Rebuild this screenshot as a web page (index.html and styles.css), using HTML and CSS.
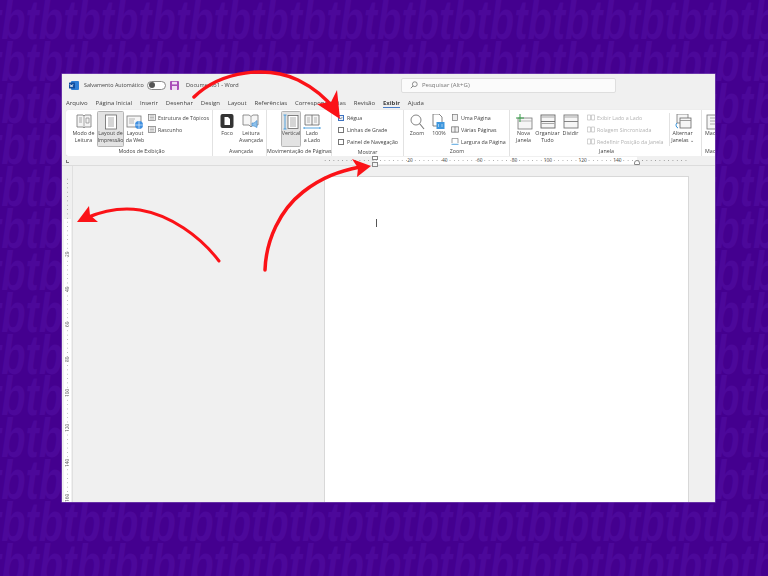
FILE: index.html
```html
<!DOCTYPE html>
<html lang="pt-BR">
<head>
<meta charset="utf-8">
<title>Word - Exibir - Régua</title>
<link rel="stylesheet" href="styles.css">
</head>
<body>
<div class="pattern" aria-hidden="true">
  <div class="pattern-row">tbtbtbtbtbtbtbtbtbtbtbtbtbtbtbtbtbtbtbtbtbtbtb</div>
  <div class="pattern-row">tbtbtbtbtbtbtbtbtbtbtbtbtbtbtbtbtbtbtbtbtbtbtb</div>
  <div class="pattern-row">tbtbtbtbtbtbtbtbtbtbtbtbtbtbtbtbtbtbtbtbtbtbtb</div>
  <div class="pattern-row">tbtbtbtbtbtbtbtbtbtbtbtbtbtbtbtbtbtbtbtbtbtbtb</div>
  <div class="pattern-row">tbtbtbtbtbtbtbtbtbtbtbtbtbtbtbtbtbtbtbtbtbtbtb</div>
  <div class="pattern-row">tbtbtbtbtbtbtbtbtbtbtbtbtbtbtbtbtbtbtbtbtbtbtb</div>
  <div class="pattern-row">tbtbtbtbtbtbtbtbtbtbtbtbtbtbtbtbtbtbtbtbtbtbtb</div>
  <div class="pattern-row">tbtbtbtbtbtbtbtbtbtbtbtbtbtbtbtbtbtbtbtbtbtbtb</div>
  <div class="pattern-row">tbtbtbtbtbtbtbtbtbtbtbtbtbtbtbtbtbtbtbtbtbtbtb</div>
  <div class="pattern-row">tbtbtbtbtbtbtbtbtbtbtbtbtbtbtbtbtbtbtbtbtbtbtb</div>
  <div class="pattern-row">tbtbtbtbtbtbtbtbtbtbtbtbtbtbtbtbtbtbtbtbtbtbtb</div>
  <div class="pattern-row">tbtbtbtbtbtbtbtbtbtbtbtbtbtbtbtbtbtbtbtbtbtbtb</div>
  <div class="pattern-row">tbtbtbtbtbtbtbtbtbtbtbtbtbtbtbtbtbtbtbtbtbtbtb</div>
  <div class="pattern-row">tbtbtbtbtbtbtbtbtbtbtbtbtbtbtbtbtbtbtbtbtbtbtb</div>
</div>

<main class="window">
  <header class="titlebar">
    <svg class="word-logo" viewBox="0 0 10 9"><rect x="2" y="0" width="8" height="9" rx="1" fill="#2f7fd6"/><rect x="0" y="1.500" width="6" height="6" rx=".6" fill="#104d9e"/><path d="M1 3l.9 3 .6-2 .6 2 .9-3" fill="none" stroke="#fff" stroke-width=".6"/></svg>
    <span class="autosave">Salvamento Automático</span>
    <span class="toggle"><span class="knob"></span></span>
    <svg class="save" viewBox="0 0 9 9"><rect width="9" height="9" rx="1" fill="#a94fb8"/><rect x="2" y=".8" width="5" height="2.600" fill="#f0dcf4"/><rect x="2" y="5" width="5" height="4" fill="#f0dcf4"/></svg>
    <span class="doc">Documento1 - Word</span>
    <div class="search">
      <svg class="search-ico" viewBox="0 0 8 8"><circle cx="4.800" cy="3.200" r="2.400" fill="none" stroke="#666" stroke-width=".7"/><path d="M3 5L.8 7.200" stroke="#666" stroke-width=".8"/></svg>
      <span>Pesquisar (Alt+G)</span>
    </div>
  </header>

  <nav class="tabs">
    <span>Arquivo</span><span>Página Inicial</span><span>Inserir</span><span>Desenhar</span><span>Design</span><span>Layout</span><span>Referências</span><span>Correspondências</span><span>Revisão</span><span class="tab-on">Exibir</span><span>Ajuda</span>
  </nav>

  <section class="ribbon">
    <div class="group g1">
      <div class="group-body">
        <div class="btn w25">
          <svg class="ico" viewBox="0 0 20 16"><path d="M3 1h6l1 1 1-1h6v12h-6l-1 1-1-1H3z" fill="#f4f4f4" stroke="#777" stroke-width=".8"/><path d="M10 2v11M5 4h3M5 6h3M5 8h3M12 4h3v5h-3z" fill="none" stroke="#888" stroke-width=".7"/></svg>
          <span>Modo de<br>Leitura</span>
        </div>
        <div class="btn w27 active ml1">
          <svg class="ico" viewBox="0 0 20 16"><rect x="4.500" y="1" width="11" height="14" fill="#fff" stroke="#666" stroke-width=".8"/><path d="M7 4h6M7 6h6M7 8h6M7 10h6M7 12h6" stroke="#888" stroke-width=".7"/></svg>
          <span>Layout de<br>Impressão</span>
        </div>
        <div class="btn w22">
          <svg class="ico" viewBox="0 0 20 16"><rect x="2" y="2" width="14" height="11" fill="#f6f6f6" stroke="#777" stroke-width=".8"/><path d="M4 5h6M4 7h5M4 9h5" stroke="#999" stroke-width=".7"/><circle cx="14" cy="11" r="4" fill="#3f8fe0"/><path d="M10 11h8M14 7v8" stroke="#fff" stroke-width=".6"/></svg>
          <span>Layout<br>da Web</span>
        </div>
        <div class="list ml2">
          <div class="item"><svg class="mini" viewBox="0 0 8 7"><rect x=".4" y=".4" width="7.200" height="6.200" fill="#eee" stroke="#777" stroke-width=".7"/><path d="M2 2h4M2 3.500h4M2 5h4" stroke="#888" stroke-width=".5"/></svg>Estrutura de Tópicos</div>
          <div class="item"><svg class="mini" viewBox="0 0 8 7"><rect x=".4" y=".4" width="7.200" height="6.200" fill="#eee" stroke="#777" stroke-width=".7"/><path d="M2 2h4M2 3.500h4M2 5h4" stroke="#888" stroke-width=".5"/></svg>Rascunho</div>
        </div>
      </div>
      <div class="group-label">Modos de Exibição</div>
    </div>

    <div class="group g2">
      <div class="group-body">
        <div class="btn w22">
          <svg class="ico" viewBox="0 0 20 16"><rect x="3.500" y="0" width="13" height="14" rx="2" fill="#333"/><path d="M7.500 3h3.500l2 2v6H7.500z" fill="#fff"/></svg>
          <span>Foco</span>
        </div>
        <div class="btn w26">
          <svg class="ico" viewBox="0 0 20 16"><path d="M2 1h6l2 1.500L12 1h5v10h-5l-2 2-2-2H2z" fill="#f6f6f6" stroke="#777" stroke-width=".8"/><path d="M10 3v9" stroke="#888" stroke-width=".7"/><path d="M11 9h2l3-2.500v7L13 12h-2z" fill="#8fc1ea" stroke="#3d8bd0" stroke-width=".6"/></svg>
          <span>Leitura<br>Avançada</span>
        </div>
      </div>
      <div class="group-label">Avançada</div>
    </div>

    <div class="group g3">
      <div class="group-body">
        <div class="btn w20 active">
          <svg class="ico" viewBox="0 0 20 16"><rect x="7" y="1.500" width="10" height="13" fill="#fff" stroke="#666" stroke-width=".8"/><path d="M9 4h6M9 6h6M9 8h6M9 10h6M9 12h6" stroke="#888" stroke-width=".7"/><path d="M4 1v14M2.500 1h3M2.500 15h3" stroke="#2f8fd8" stroke-width=".8" fill="none"/></svg>
          <span>Vertical</span>
        </div>
        <div class="btn w22">
          <svg class="ico" viewBox="0 0 20 16"><path d="M3 1h14v10H3zM10 1v10" fill="#f6f6f6" stroke="#666" stroke-width=".8"/><path d="M5 4h3M5 6h3M5 8h3M12 4h3M12 6h3M12 8h3" stroke="#888" stroke-width=".6"/><path d="M2 14h16M2 13v2M18 13v2" stroke="#2f8fd8" stroke-width=".8"/></svg>
          <span>Lado<br>a Lado</span>
        </div>
      </div>
      <div class="group-label">Movimentação de Páginas</div>
    </div>

    <div class="group g4">
      <div class="checks">
        <label class="check"><span class="box on"><svg viewBox="0 0 6 6"><path d="M1 3l1.500 1.500L5 1.500" fill="none" stroke="#444" stroke-width=".8"/></svg></span>Régua</label>
        <label class="check"><span class="box"></span>Linhas de Grade</label>
        <label class="check"><span class="box"></span>Painel de Navegação</label>
      </div>
      <div class="group-label">Mostrar</div>
    </div>

    <div class="group g5">
      <div class="group-body">
        <div class="btn w24">
          <svg class="ico" viewBox="0 0 20 16"><circle cx="9" cy="6" r="5" fill="#fff" stroke="#777" stroke-width=".9"/><path d="M12.500 9.500L17 15" stroke="#777" stroke-width="1.100"/></svg>
          <span>Zoom</span>
        </div>
        <div class="btn w20">
          <svg class="ico" viewBox="0 0 20 16"><path d="M4 0h6l3 3v9H4z" fill="#fff" stroke="#666" stroke-width=".8"/><rect x="7.500" y="8" width="8" height="7" fill="#3f97dd"/><path d="M9.500 10v3M13 10v3" stroke="#dcefff" stroke-width=".6"/></svg>
          <span>100%</span>
        </div>
        <div class="list ml2">
          <div class="item"><svg class="mini" viewBox="0 0 8 7"><rect x="1.500" y=".4" width="5" height="6.200" fill="#eee" stroke="#777" stroke-width=".7"/></svg>Uma Página</div>
          <div class="item"><svg class="mini" viewBox="0 0 8 7"><path d="M.4.8h7.200v5.400H.4zM4 .8v5.400" fill="#eee" stroke="#666" stroke-width=".7"/></svg>Várias Páginas</div>
          <div class="item"><svg class="mini" viewBox="0 0 8 7"><path d="M1 5V.4h6V5" fill="#fff" stroke="#777" stroke-width=".7"/><path d="M.5 6.300h7" stroke="#2f8fd8" stroke-width=".8"/></svg>Largura da Página</div>
        </div>
      </div>
      <div class="group-label">Zoom</div>
    </div>

    <div class="group g6">
      <div class="group-body">
        <div class="btn w23">
          <svg class="ico" viewBox="0 0 20 16"><rect x="4" y="4" width="14" height="11" fill="#f6f6f6" stroke="#777" stroke-width=".8"/><path d="M4 7h14" stroke="#aaa" stroke-width=".8"/><path d="M6 0v8M2 4h8" stroke="#39a04a" stroke-width="1"/></svg>
          <span>Nova<br>Janela</span>
        </div>
        <div class="btn w25">
          <svg class="ico" viewBox="0 0 20 16"><rect x="3" y="1" width="14" height="13" fill="#f6f6f6" stroke="#666" stroke-width=".9"/><path d="M3 7.500h14" stroke="#666" stroke-width=".9"/><path d="M3 3h14M3 9.500h14" stroke="#aaa" stroke-width="1.200"/></svg>
          <span>Organizar<br>Tudo</span>
        </div>
        <div class="btn w21">
          <svg class="ico" viewBox="0 0 20 16"><rect x="3" y="1" width="14" height="13" fill="#f6f6f6" stroke="#777" stroke-width=".9"/><path d="M3 7.500h14" stroke="#777" stroke-width=".9"/><path d="M3 3h14" stroke="#aaa" stroke-width="1.200"/></svg>
          <span>Dividir</span>
        </div>
        <div class="list ml6 dim">
          <div class="item"><svg class="mini" viewBox="0 0 8 7"><path d="M.4 1h3.200v5H.4zM4.400 1h3.200v5H4.400z" fill="none" stroke="#bbb" stroke-width=".7"/></svg>Exibir Lado a Lado</div>
          <div class="item"><svg class="mini" viewBox="0 0 8 7"><path d="M.4 1h3.200v5H.4zM4.400 1h3.200v5H4.400z" fill="none" stroke="#bbb" stroke-width=".7"/></svg>Rolagem Sincronizada</div>
          <div class="item"><svg class="mini" viewBox="0 0 8 7"><path d="M.4 1h3.200v5H.4zM4.400 1h3.200v5H4.400z" fill="none" stroke="#bbb" stroke-width=".7"/></svg>Redefinir Posição da Janela</div>
        </div>
        <div class="vsep"></div>
        <div class="btn w26">
          <svg class="ico" viewBox="0 0 20 16"><rect x="4" y="0" width="11" height="9" fill="#f6f6f6" stroke="#777" stroke-width=".8"/><rect x="7" y="4" width="11" height="10" fill="#f6f6f6" stroke="#666" stroke-width=".8"/><path d="M7 6.500h11" stroke="#888" stroke-width=".8"/><path d="M4 9a3 3 0 0 0 1 5" fill="none" stroke="#2f8fd8" stroke-width="1"/></svg>
          <span>Alternar<br>Janelas ⌄</span>
        </div>
      </div>
      <div class="group-label">Janela</div>
    </div>

    <div class="group g7">
      <div class="group-body">
        <div class="btn w26 clip">
          <svg class="ico" viewBox="0 0 20 16"><rect x="3" y="1" width="14" height="14" fill="#f6f6f6" stroke="#777" stroke-width=".8"/><path d="M6 4h8M6 7h8M6 10h8" stroke="#999" stroke-width=".8"/></svg>
          <span>Macros</span>
        </div>
      </div>
      <div class="group-label left">Macros</div>
    </div>
  </section>

  <div class="hruler-row">
    <div class="corner"></div>
    <div class="hruler">
      <div class="hr-grey"></div>
      <div class="hr-white">
        <span>20</span><span>40</span><span>60</span><span>80</span><span>100</span><span>120</span><span>140</span>
        <i class="marker-top"></i>
        <i class="marker-bottom"></i>
        <i class="marker-right"></i>
      </div>
      <div class="hr-grey end"></div>
    </div>
  </div>

  <div class="workspace">
    <aside class="vruler">
      <div class="vr-grey"></div>
      <div class="vr-white">
        <span>20</span><span>40</span><span>60</span><span>80</span><span>100</span><span>120</span><span>140</span><span>160</span>
      </div>
    </aside>
    <div class="canvas">
      <div class="page"><div class="caret"></div></div>
    </div>
  </div>
</main>

<svg class="arrows" viewBox="0 0 768 576" aria-hidden="true">
  <g fill="none" stroke="#fb1217" stroke-linecap="round">
    <path stroke-width="3.500" d="M194 97C222 70 268 66 298 80C314 88 326 98 335 110"/>
    <path stroke-width="3" d="M219 261C200 236 170 215 140 210C120 207 100 212 86 218"/>
    <path stroke-width="3.500" d="M265 270C266 240 280 210 303 192C322 177 340 171 360 167"/>
  </g>
  <g fill="#fb1217">
    <path d="M340 119L337 90L331 102L317 104Z"/>
    <path d="M77 222L89 206L90 215L98 222Z"/>
    <path d="M371 166L352 159L358 168L357 177Z"/>
  </g>
</svg>
</body>
</html>
```

FILE: styles.css
```css
* { box-sizing: border-box; }
html, body { margin: 0; height: 100%; }
body {
  position: relative;
  width: 768px;
  height: 576px;
  overflow: hidden;
  padding: 74px 53px 74px 62px;
  background: #44008f;
  font-family: "Open Sans", "Liberation Sans", sans-serif;
  font-size: 5.300px;
  color: #444;
}

.pattern { position: absolute; inset: 0; overflow: hidden; }
.pattern-row {
  height: 41.830px;
  margin-left: -12px;
  white-space: nowrap;
  font: italic bold 55px/41.830px "Liberation Sans", sans-serif;
  color: #4c089a;
  transform: scaleX(.724);
  transform-origin: left top;
}

.window {
  position: relative;
  height: 428px;
  display: flex;
  flex-direction: column;
  overflow: hidden;
  background: #f0f0f0;
  box-shadow: 0 0 0 .5px #8a63bd;
  filter: blur(.3px);
}

.titlebar { flex: none; height: 22px; display: flex; align-items: center; padding-left: 7px; }
.word-logo { width: 10px; height: 9px; }
.autosave { margin-left: 5px; width: 63px; white-space: nowrap; font-size: 5.400px; }
.toggle { width: 19px; height: 9px; border: .7px solid #888; border-radius: 5px; background: #fff; display: flex; align-items: center; padding-left: 1px; }
.knob { width: 6px; height: 6px; border-radius: 50%; background: #555; }
.save { width: 9px; height: 9px; margin-left: 4px; }
.doc { margin-left: 7px; width: 215px; white-space: nowrap; font-size: 5.600px; }
.search { width: 215px; height: 15px; background: #fbfbfb; border: .5px solid #dedede; border-radius: 2px; display: flex; align-items: center; padding-left: 8px; gap: 4px; color: #777; font-size: 6px; }
.search-ico { width: 8px; height: 8px; }

.tabs { flex: none; height: 14px; display: flex; align-items: center; gap: 7.900px; padding-left: 4px; font-size: 6px; white-space: nowrap; }
.tab-on { font-weight: 700; border-bottom: 1px solid #4a7ec8; line-height: 7px; margin-top: 1px; }

.ribbon { flex: none; height: 46px; margin-left: 4px; display: flex; background: #fff; border-radius: 2px 0 0 2px; box-shadow: 0 .5px 1px #d0d0d0; overflow: hidden; }
.group { flex: none; display: flex; flex-direction: column; position: relative; border-right: .6px solid #e2e2e2; }
.group-body { flex: 1; display: flex; align-items: flex-start; padding-top: 1px; min-height: 0; }
.group-label { flex: none; height: 9px; line-height: 8px; text-align: center; white-space: nowrap; }
.group-label.left { text-align: left; padding-left: 3px; }
.g1 { width: 147px; padding-left: 5px; }
.g2 { width: 54px; padding-left: 3px; }
.g3 { width: 65px; }
.g3 .group-body { padding-left: 14px; }
.g4 { width: 72px; }
.g5 { width: 106px; padding-left: 1px; }
.g6 { width: 192px; padding-left: 2px; }
.g7 { width: 30px; border-right: 0; }

.btn { flex: none; height: 36px; display: flex; flex-direction: column; align-items: center; padding-top: 1.500px; text-align: center; line-height: 7.400px; white-space: nowrap; border: .6px solid transparent; }
.btn .ico { width: 20px; height: 16px; margin-bottom: .5px; flex: none; }
.btn.active { background: #e3e3e3; border-color: #b5b5b5; border-radius: 1.500px; }
.w20 { width: 20px; } .w21 { width: 21px; } .w22 { width: 22px; } .w23 { width: 23px; }
.w24 { width: 24px; } .w25 { width: 25px; } .w26 { width: 26px; } .w27 { width: 27px; }
.clip { margin-left: -1px; }

.list { display: flex; flex-direction: column; padding-top: .5px; white-space: nowrap; }
.ml1 { margin-left: 1px; } .ml2 { margin-left: 2px; } .ml6 { margin-left: 6px; }
.item { height: 12px; display: flex; align-items: center; gap: 2px; }
.mini { width: 8px; height: 7px; flex: none; }
.dim { color: #b4b4b4; width: 82px; }
.vsep { flex: none; width: .6px; height: 33px; margin-top: 2px; background: #e2e2e2; }

.checks { flex: 1; padding: 1.500px 0 0 6px; display: flex; flex-direction: column; }
.check { height: 12px; display: flex; align-items: center; gap: 3px; white-space: nowrap; }
.box { width: 6px; height: 6px; border: .6px solid #777; background: #fff; display: block; }
.box.on { border-color: #3d72c0; background: #e8f0fb; }
.box svg { display: block; width: 100%; height: 100%; }

.hruler-row { flex: none; height: 10px; display: flex; border-bottom: .6px solid #dcdcdc; background: #f0f0f0; position: relative; }
.corner { width: 262px; flex: none; position: relative; background: linear-gradient(#777, #777) 4px 4px / 1px 3px no-repeat, linear-gradient(#777, #777) 4px 6px / 3px 1px no-repeat; }
.hruler { flex: 1; display: flex; height: 7px; margin-top: 1px; }
.hr-grey { width: 51px; flex: none; background: radial-gradient(circle, #999 0 .4px, transparent .7px) -1px 0 / 4.350px 7px; }
.hr-white { width: 262px; flex: none; position: relative; display: flex; padding-left: 3px; background: #fff radial-gradient(circle, #aaa 0 .4px, transparent .7px) -1px 0 / 4.350px 7px; }
.hr-white span { width: 34.800px; flex: none; text-align: right; font-size: 4.800px; line-height: 7px; }
.marker-top { position: absolute; left: -3px; top: -1px; width: 6px; height: 4px; background: #fff; border: .6px solid #888; }
.marker-bottom { position: absolute; left: -3px; top: 5px; width: 6px; height: 5px; background: #f4f4f4; border: .6px solid #888; }
.marker-right { position: absolute; right: -3px; top: 3px; width: 6px; height: 5px; background: #fff; border: .6px solid #888; border-radius: 3px 3px 0 0; }

.workspace { flex: 1; display: flex; min-height: 0; }
.vruler { flex: none; width: 11px; padding: 10px 1px 0 2px; border-right: .6px solid #e0e0e0; display: flex; flex-direction: column; }
.vr-grey { flex: none; height: 43px; background: radial-gradient(circle, #aaa 0 .4px, transparent .7px) 0 1px / 7px 4.350px; }
.vr-white { flex: 1; padding-top: 2.500px; background: #fff radial-gradient(circle, #bbb 0 .4px, transparent .7px) 0 1px / 7px 4.350px; display: flex; flex-direction: column; }
.vr-white span { flex: none; height: 35px; writing-mode: vertical-rl; transform: rotate(180deg); font-size: 4.800px; line-height: 7px; color: #666; }

.canvas { flex: 1; background: #f0f0f0; padding: 9.500px 0 0 250.500px; min-width: 0; }
.page { width: 365px; height: 340px; background: #fff; border: .6px solid #d8d8d8; padding: 42px 0 0 51px; }
.caret { width: 1px; height: 8px; background: #555; }

.arrows { position: absolute; left: 0; top: 0; width: 768px; height: 576px; }
```
